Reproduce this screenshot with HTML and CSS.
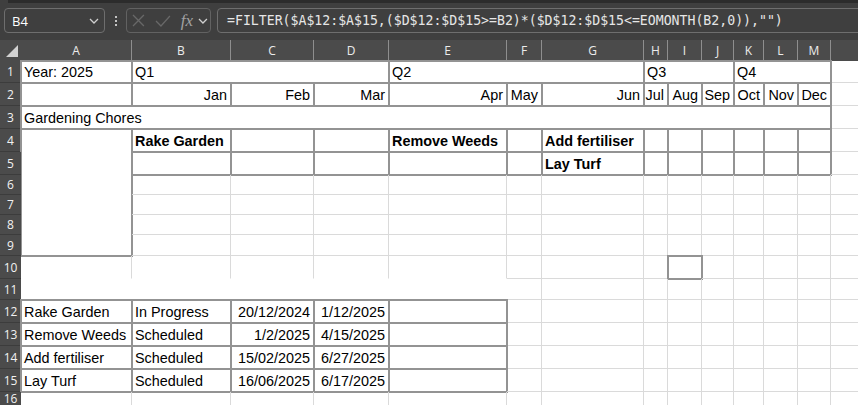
FILE: index.html
```html
<!DOCTYPE html>
<html lang="en">
<head>
<meta charset="utf-8">
<title>Gardening Chores 2025</title>
<link rel="stylesheet" href="styles.css">
</head>
<body>
<div class="bar">
  <div class="namebox">
    <span class="ref">B4</span>
    <svg class="chev" width="10" height="6" viewBox="0 0 10 6"><path d="M1 1 L5 5 L9 1" /></svg>
  </div>
  <div class="grip"><i></i><i></i><i></i></div>
  <div class="fxbox">
    <svg class="cancel" width="13" height="13" viewBox="0 0 13 13"><path d="M1 1 L12 12 M12 1 L1 12" /></svg>
    <svg class="enter" width="16" height="12" viewBox="0 0 16 12"><path d="M1 6 L6 11 L15 1" /></svg>
    <span class="fx">fx</span>
    <svg class="chev" width="10" height="6" viewBox="0 0 10 6"><path d="M1 1 L5 5 L9 1" /></svg>
  </div>
  <div class="formula">=FILTER($A$12:$A$15,($D$12:$D$15&gt;=B2)*($D$12:$D$15&lt;=EOMONTH(B2,0)),"")</div>
</div>

<div class="sheet">
  <!-- column headers -->
  <div class="corner"><svg width="12" height="12" viewBox="0 0 12 12"><polygon points="12,0 12,12 0,12" /></svg></div>
  <div class="ch">A</div><div class="ch">B</div><div class="ch">C</div><div class="ch">D</div>
  <div class="ch">E</div><div class="ch">F</div><div class="ch">G</div><div class="ch">H</div>
  <div class="ch">I</div><div class="ch">J</div><div class="ch">K</div><div class="ch">L</div>
  <div class="ch">M</div><div class="ch"></div>

  <!-- row 1: quarters -->
  <div class="rh">1</div>
  <div class="c b">Year: 2025</div>
  <div class="c b s3">Q1</div>
  <div class="c b s3">Q2</div>
  <div class="c b s3">Q3</div>
  <div class="c b s3">Q4</div>
  <div class="c"></div>

  <!-- row 2: months -->
  <div class="rh">2</div>
  <div class="c b"></div>
  <div class="c b r">Jan</div><div class="c b r">Feb</div><div class="c b r">Mar</div>
  <div class="c b r">Apr</div><div class="c b r">May</div><div class="c b r">Jun</div>
  <div class="c b r">Jul</div><div class="c b r">Aug</div><div class="c b r">Sep</div>
  <div class="c b r">Oct</div><div class="c b r">Nov</div><div class="c b r">Dec</div>
  <div class="c"></div>

  <!-- row 3 -->
  <div class="rh">3</div>
  <div class="c b s13">Gardening Chores</div>
  <div class="c"></div>

  <!-- row 4 -->
  <div class="rh">4</div>
  <div class="c b rs6"></div>
  <div class="c b bold">Rake Garden</div>
  <div class="c b"></div><div class="c b"></div>
  <div class="c b bold">Remove Weeds</div>
  <div class="c b"></div>
  <div class="c b bold">Add fertiliser</div>
  <div class="c b"></div><div class="c b"></div><div class="c b"></div>
  <div class="c b"></div><div class="c b"></div><div class="c b"></div>
  <div class="c"></div>

  <!-- row 5 -->
  <div class="rh">5</div>
  <div class="c b"></div><div class="c b"></div><div class="c b"></div>
  <div class="c b"></div><div class="c b"></div>
  <div class="c b bold">Lay Turf</div>
  <div class="c b"></div><div class="c b"></div><div class="c b"></div>
  <div class="c b"></div><div class="c b"></div><div class="c b"></div>
  <div class="c"></div>

  <!-- rows 6-9 -->
  <div class="rh">6</div>
  <div class="c"></div><div class="c"></div><div class="c"></div><div class="c"></div><div class="c"></div><div class="c"></div><div class="c"></div>
  <div class="c"></div><div class="c"></div><div class="c"></div><div class="c"></div><div class="c"></div><div class="c"></div>
  <div class="rh">7</div>
  <div class="c"></div><div class="c"></div><div class="c"></div><div class="c"></div><div class="c"></div><div class="c"></div><div class="c"></div>
  <div class="c"></div><div class="c"></div><div class="c"></div><div class="c"></div><div class="c"></div><div class="c"></div>
  <div class="rh">8</div>
  <div class="c"></div><div class="c"></div><div class="c"></div><div class="c"></div><div class="c"></div><div class="c"></div><div class="c"></div>
  <div class="c"></div><div class="c"></div><div class="c"></div><div class="c"></div><div class="c"></div><div class="c"></div>
  <div class="rh">9</div>
  <div class="c"></div><div class="c"></div><div class="c"></div><div class="c"></div><div class="c"></div><div class="c"></div><div class="c"></div>
  <div class="c"></div><div class="c"></div><div class="c"></div><div class="c"></div><div class="c"></div><div class="c"></div>

  <!-- row 10 -->
  <div class="rh">10</div>
  <div class="c nb"></div><div class="c nb"></div><div class="c nb"></div><div class="c nb"></div><div class="c nb"></div>
  <div class="c"></div><div class="c"></div><div class="c"></div>
  <div class="c b"></div>
  <div class="c"></div><div class="c"></div><div class="c"></div><div class="c"></div><div class="c"></div>

  <!-- row 11 -->
  <div class="rh">11</div>
  <div class="fill s5"></div>
  <div class="c"></div><div class="c"></div><div class="c"></div><div class="c"></div><div class="c"></div>
  <div class="c"></div><div class="c"></div><div class="c"></div><div class="c"></div>

  <!-- rows 12-15: chore list -->
  <div class="rh">12</div>
  <div class="c b">Rake Garden</div><div class="c b">In Progress</div>
  <div class="c b r">20/12/2024</div><div class="c b r">1/12/2025</div><div class="c b"></div>
  <div class="c"></div><div class="c"></div><div class="c"></div><div class="c"></div><div class="c"></div>
  <div class="c"></div><div class="c"></div><div class="c"></div><div class="c"></div>

  <div class="rh">13</div>
  <div class="c b">Remove Weeds</div><div class="c b">Scheduled</div>
  <div class="c b r">1/2/2025</div><div class="c b r">4/15/2025</div><div class="c b"></div>
  <div class="c"></div><div class="c"></div><div class="c"></div><div class="c"></div><div class="c"></div>
  <div class="c"></div><div class="c"></div><div class="c"></div><div class="c"></div>

  <div class="rh">14</div>
  <div class="c b">Add fertiliser</div><div class="c b">Scheduled</div>
  <div class="c b r">15/02/2025</div><div class="c b r">6/27/2025</div><div class="c b"></div>
  <div class="c"></div><div class="c"></div><div class="c"></div><div class="c"></div><div class="c"></div>
  <div class="c"></div><div class="c"></div><div class="c"></div><div class="c"></div>

  <div class="rh">15</div>
  <div class="c b">Lay Turf</div><div class="c b">Scheduled</div>
  <div class="c b r">16/06/2025</div><div class="c b r">6/17/2025</div><div class="c b"></div>
  <div class="c"></div><div class="c"></div><div class="c"></div><div class="c"></div><div class="c"></div>
  <div class="c"></div><div class="c"></div><div class="c"></div><div class="c"></div>

  <!-- row 16 -->
  <div class="rh rh-last">16</div>
  <div class="c"></div><div class="c"></div><div class="c"></div><div class="c"></div><div class="c"></div><div class="c"></div><div class="c"></div>
  <div class="c"></div><div class="c"></div><div class="c"></div><div class="c"></div><div class="c"></div><div class="c"></div><div class="c"></div>
</div>
</body>
</html>
```

FILE: styles.css
```css
* {
  box-sizing: border-box;
  margin: 0;
  padding: 0;
}

body {
  width: 858px;
  height: 405px;
  overflow: hidden;
  background: #4b4b4b;
  font-family: "Liberation Sans", Arial, sans-serif;
}

/* ---------- formula bar ---------- */
.bar {
  height: 40px;
  display: flex;
  align-items: flex-start;
  padding: 8px 0 0 4px;
  background:
    linear-gradient(#2c2c2c, #2c2c2c) 8px 0 / 100% 3px no-repeat,
    #3f3f3f;
}

.namebox {
  width: 101px;
  height: 25px;
  border: 1px solid #6e6e6e;
  border-radius: 4px;
  display: flex;
  align-items: center;
  padding: 0 5px 0 7px;
  flex: none;
}

.ref {
  font-family: "Open Sans", "Liberation Sans", sans-serif;
  font-size: 13px;
  color: #ffffff;
}

.chev {
  margin-left: auto;
  fill: none;
  stroke: #cfcfcf;
  stroke-width: 1.3;
}

.grip {
  width: 3px;
  margin: 8px 0 0 10px;
  display: flex;
  flex-direction: column;
  gap: 2px;
  flex: none;
}

.grip i {
  width: 2px;
  height: 2px;
  background: #c4c4c4;
}

.fxbox {
  width: 85px;
  height: 25px;
  margin-left: 8px;
  border: 1px solid #626262;
  border-radius: 4px;
  display: flex;
  align-items: center;
  padding: 0 2px 0 5px;
  flex: none;
}

.cancel,
.enter {
  fill: none;
  stroke: #686868;
  stroke-width: 1.3;
}

.enter {
  margin-left: 10px;
}

.fx {
  margin-left: 10px;
  font-family: "Liberation Serif", serif;
  font-style: italic;
  font-size: 17px;
  color: #a2a2a2;
  line-height: 1;
}

.fxbox .chev {
  margin-left: 5px;
}

.formula {
  width: 660px;
  height: 25px;
  margin-left: 6px;
  border: 1px solid #6e6e6e;
  border-radius: 4px;
  padding-left: 9px;
  flex: none;
  font-family: "DejaVu Sans Mono", "Liberation Mono", monospace;
  font-size: 13.2px;
  line-height: 23px;
  color: #e6e6e6;
  white-space: nowrap;
}

/* ---------- worksheet ---------- */
.sheet {
  display: grid;
  grid-template-columns: 21px 111px 99px 83px 75px 118px 35px 102px 24px 34px 32px 30px 34px 33px 40px;
  grid-template-rows: 21px 22px 23px 23px 23px 23px 20px 20px 20px 21px 23px 21px 23px 23px 23px 23px 20px;
  background: #ffffff;
}

.corner {
  background: #4b4b4b;
  display: flex;
  align-items: flex-end;
  justify-content: flex-end;
  padding: 0 3px 4px 0;
}

.corner svg {
  fill: #d2d2d2;
}

.ch {
  background: #4b4b4b;
  border-right: 1px solid #8e8e8e;
  color: #ececec;
  font-family: "Open Sans", "Liberation Sans", sans-serif;
  font-size: 12px;
  display: flex;
  align-items: center;
  justify-content: center;
}

.rh {
  background: #4b4b4b;
  border-bottom: 1px solid #3c3c3c;
  color: #f2f2f2;
  font-family: "Open Sans", "Liberation Sans", sans-serif;
  font-size: 12px;
  display: flex;
  align-items: center;
  justify-content: center;
  overflow: hidden;
}

/* the last row only peeks in at the bottom edge, so its number sits near the top */
.rh-last {
  align-items: flex-start;
  line-height: 13px;
}

.c {
  border-right: 1px solid #dadada;
  border-bottom: 1px solid #dadada;
  display: flex;
  align-items: flex-end;
  padding: 0 3px 2px 3px;
  font-size: 14.4px;
  line-height: 16px;
  color: #000000;
  white-space: nowrap;
}

.r {
  justify-content: flex-end;
}

.bold {
  font-weight: bold;
}

/* medium grey cell border, 2px straddling each grid line */
.b {
  border-right-color: #939393;
  border-bottom-color: #939393;
  box-shadow: 0 0 0 1px #939393, inset 1px 1px 0 #939393;
}

.nb {
  border-bottom-color: transparent;
}

.fill {
  background: #ffffff;
}

.s3 { grid-column: span 3; }
.s5 { grid-column: span 5; }
.s13 { grid-column: span 13; }
.rs6 { grid-row: span 6; }
```
